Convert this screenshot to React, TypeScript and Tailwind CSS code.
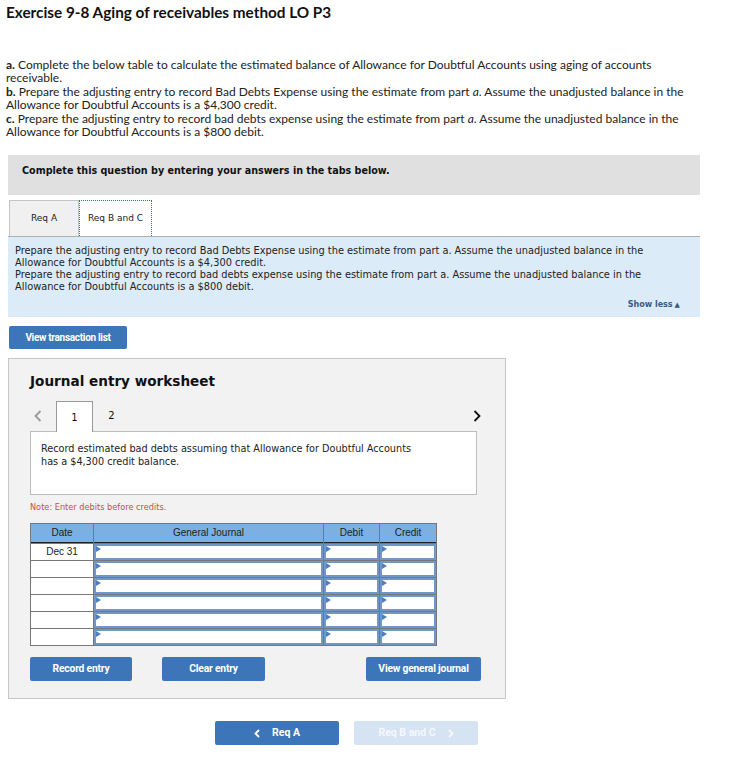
import React from "react";

const proxima = { fontFamily: "Lato, 'Open Sans', sans-serif" };
const verdana = { fontFamily: "'DejaVu Sans', Verdana, sans-serif" };
const arial = { fontFamily: "'Liberation Sans', Arial, sans-serif" };
const btnFont = { fontFamily: "Roboto, 'Liberation Sans', sans-serif" };

function Marker() {
  return (
    <span className="absolute left-0 top-0 w-0 h-0 border-t-[3px] border-b-[3px] border-l-[5px] border-t-transparent border-b-transparent border-l-[#4a7fc1]" />
  );
}

function InputCell() {
  return (
    <div className="relative bg-white border-2 border-[#6f97c8]">
      <Marker />
    </div>
  );
}

function JournalTable() {
  const rows = ["Dec 31", "", "", "", "", ""];
  return (
    <div
      className="w-[407px] border border-[#777] bg-[#777] grid grid-cols-[62px_229px_55px_56px] grid-rows-[19px_repeat(6,16px)] gap-px"
      style={arial}
    >
      {["Date", "General Journal", "Debit", "Credit"].map((h) => (
        <div key={h} className="bg-[#7cafe2] flex items-center justify-center text-[10px] leading-none text-[#222] border-b border-[#222]">
          {h}
        </div>
      ))}
      {rows.map((d, i) => (
        <React.Fragment key={i}>
          <div className="bg-white flex items-start justify-center pt-[3px] text-[10px] leading-none text-[#222]">{d}</div>
          <InputCell />
          <InputCell />
          <InputCell />
        </React.Fragment>
      ))}
    </div>
  );
}

export default function App() {
  return (
    <div className="w-[735px] min-h-[775px] bg-white text-[#222] pl-[8px] pr-[35px]">
      <h1 className="pt-[4px] -ml-[2px] text-[15.3px] font-bold leading-[17px] text-[#111]" style={proxima}>
        Exercise 9-8 Aging of receivables method LO P3
      </h1>

      <div className="mt-[37px] -ml-[2px] h-[81px] text-[12px] leading-[13.4px] text-[#222]" style={proxima}>
        <p>
          <b>a.</b> Complete the below table to calculate the estimated balance of Allowance for Doubtful Accounts using aging of accounts receivable.
        </p>
        <p>
          <b>b.</b> Prepare the adjusting entry to record Bad Debts Expense using the estimate from part <i>a</i>. Assume the unadjusted balance in the Allowance for Doubtful Accounts is a $4,300 credit.
        </p>
        <p>
          <b>c.</b> Prepare the adjusting entry to record bad debts expense using the estimate from part <i>a</i>. Assume the unadjusted balance in the Allowance for Doubtful Accounts is a $800 debit.
        </p>
      </div>

      <div className="mt-[16px] w-[692px] h-[40px] bg-[#e0e0e0] pl-[14px] pt-[10px] text-[9.6px] leading-[12px] font-bold text-[#111]" style={verdana}>
        Complete this question by entering your answers in the tabs below.
      </div>

      <div className="mt-[5px] flex items-end h-[36px] pl-px" style={verdana}>
        <div className="w-[70px] h-[36px] bg-[#f0f0f0] border border-[#c4c4c4] border-b-0 flex items-center justify-center text-[9px] text-[#222]">
          Req A
        </div>
        <div className="w-[73px] h-[36px] bg-white border border-dotted border-[#3a6aa8] border-b-0 flex items-center justify-center text-[9px] text-[#222]">
          Req B and C
        </div>
      </div>

      <div className="w-[692px] h-[81px] bg-[#dcebf8] border-t border-[#b0b0b0] pt-[8px] px-[7px] relative" style={verdana}>
        <p className="text-[9.8px] leading-[12px] text-[#222]">
          Prepare the adjusting entry to record Bad Debts Expense using the estimate from part a. Assume the unadjusted balance in the Allowance for Doubtful Accounts is a $4,300 credit.
          <br />
          Prepare the adjusting entry to record bad debts expense using the estimate from part a. Assume the unadjusted balance in the Allowance for Doubtful Accounts is a $800 debit.
        </p>
        <div className="absolute right-[20px] bottom-[6px] text-[8px] font-bold text-[#3d5a80] flex items-center gap-[2px]">
          Show less <span className="text-[7px]">▲</span>
        </div>
      </div>

      <button
        className="mt-[9px] ml-px w-[118px] h-[23px] bg-[#3c76b8] rounded-[2px] text-white text-[10px] font-bold tracking-[-0.3px] block"
        style={btnFont}
      >
        View transaction list
      </button>

      <div className="mt-[9px] w-[498px] h-[341px] bg-[#f2f2f2] border border-[#c6c6c6] pl-[21px] pr-[24px]" style={verdana}>
        <h2 className="mt-[14px] text-[13.6px] font-bold leading-[17px] text-[#111]">Journal entry worksheet</h2>

        <div className="mt-[10px] flex items-end h-[31px] relative">
          <span className="w-[26px] pl-[4px] self-center leading-none">
            <svg width="8" height="12" viewBox="0 0 8 12"><path d="M6.5 1 L1.5 6 L6.5 11" stroke="#9a9a9a" strokeWidth="1.8" fill="none" /></svg>
          </span>
          <div className="w-[37px] h-[31px] bg-white border border-[#999] border-b-0 flex items-center justify-center text-[10px] text-[#111] relative z-10 -mb-px">
            1
          </div>
          <div className="w-[37px] h-[31px] flex items-center justify-center text-[10px] text-[#111]">2</div>
          <span className="absolute right-[0px] top-[10px]">
            <svg width="8" height="12" viewBox="0 0 8 12"><path d="M1.5 1 L6.5 6 L1.5 11" stroke="#111" strokeWidth="1.8" fill="none" /></svg>
          </span>
        </div>

        <div className="w-[447px] h-[64px] bg-white border border-[#bdbdbd] px-[10px] pt-[10px] text-[9.7px] leading-[13px] text-[#222]">
          Record estimated bad debts assuming that Allowance for Doubtful Accounts
          <br />
          has a $4,300 credit balance.
        </div>

        <p className="mt-[6px] text-[8.2px] leading-[12px] text-[#c0504d]">Note: Enter debits before credits.</p>

        <div className="mt-[10px]">
          <JournalTable />
        </div>

        <div className="mt-[11px] flex items-center text-white text-[10.3px] font-bold tracking-[-0.2px]" style={btnFont}>
          <button className="w-[103px] h-[24px] bg-[#3c76b8] rounded-[2px]">Record entry</button>
          <button className="ml-[30px] w-[104px] h-[24px] bg-[#3c76b8] rounded-[2px]">Clear entry</button>
          <button className="ml-[101px] w-[116px] h-[24px] bg-[#3c76b8] rounded-[2px]">View general journal</button>
        </div>
      </div>

      <div className="mt-[22px] flex items-center text-[10.5px] font-bold text-white" style={btnFont}>
        <button className="ml-[207px] w-[124px] h-[24px] bg-[#3c76b8] rounded-[2px] flex items-center justify-center gap-[12px]">
          <svg width="6" height="9" viewBox="0 0 6 9"><path d="M5 1 L1.5 4.5 L5 8" stroke="#fff" strokeWidth="1.8" fill="none" /></svg>
          Req A
        </button>
        <button className="ml-[15px] w-[124px] h-[24px] bg-[#d6e3f2] rounded-[2px] flex items-center justify-center gap-[12px] text-[#f4f8fc]">
          Req B and C
          <svg width="6" height="9" viewBox="0 0 6 9"><path d="M1 1 L4.5 4.5 L1 8" stroke="#f4f8fc" strokeWidth="1.8" fill="none" /></svg>
        </button>
      </div>
    </div>
  );
}
